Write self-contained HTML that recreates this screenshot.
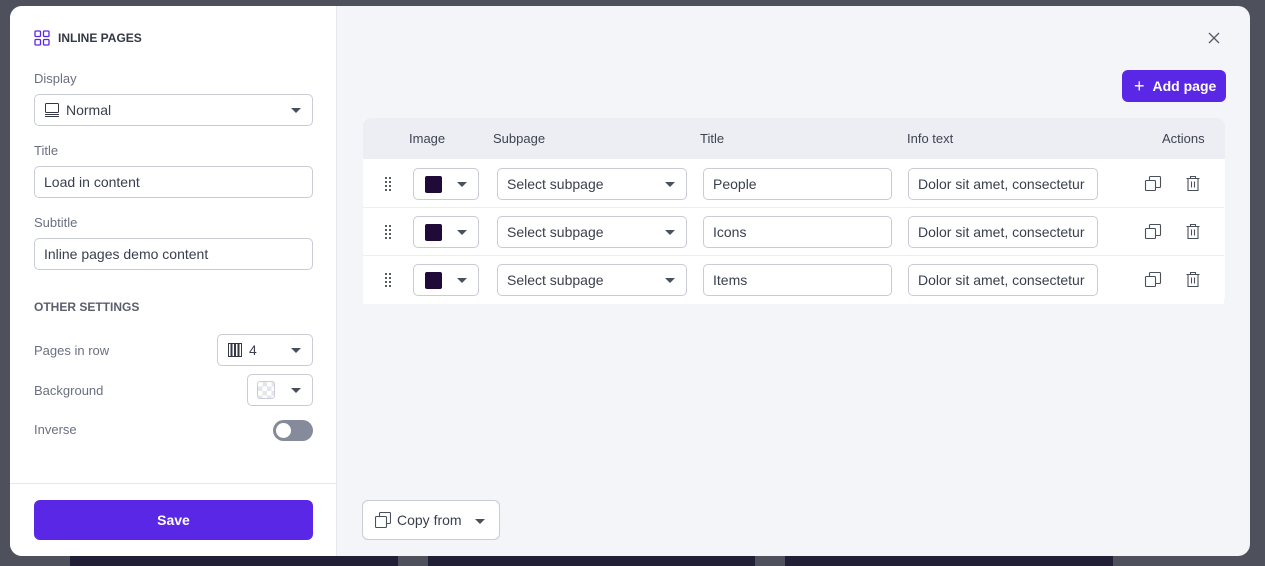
<!DOCTYPE html>
<html><head><style>
*{box-sizing:border-box;margin:0;padding:0}
body{width:1265px;height:566px;background:#4e515b;font-family:"Liberation Sans",sans-serif;position:relative;overflow:hidden;color:#333844}
.a{position:absolute}
.blk{background:#211f36;top:556px;height:10px}
.modal{left:10px;top:6px;width:1240px;height:550px;border-radius:12px;overflow:hidden;background:#f4f5f8}
.left{left:0;top:0;width:327px;height:550px;background:#fff;border-right:1px solid #e6e8ee}
.lbl{font-size:13px;color:#6b7080}
.inp{border:1px solid #c9ccd6;border-radius:5px;background:#fff;font-size:14px;color:#3a3f4c;display:flex;align-items:center;padding-left:9px}
.caret{position:absolute;width:0;height:0;border-left:5px solid transparent;border-right:5px solid transparent;border-top:5px solid #4a4f5c}
.th{font-size:13px;color:#3e4350;top:131px}
.row{left:363px;width:861px;height:48px;background:#fff;border-bottom:1px solid #eceef2}
.sw{width:17px;height:17px;background:#1f0a38;border-radius:2px}
.clip{overflow:hidden;white-space:nowrap;padding-right:8px}
</style></head><body>
<div class="a blk" style="left:70px;width:328px"></div>
<div class="a blk" style="left:428px;width:327px"></div>
<div class="a blk" style="left:785px;width:328px"></div>
<div class="a modal">
 <div class="a left">
  <svg class="a" style="left:24px;top:24px" width="16" height="16" viewBox="0 0 16 16" fill="none" stroke="#5b27e6" stroke-width="1.3"><rect x="1" y="1" width="5.5" height="5.5" rx="1"/><rect x="9.5" y="1" width="5.5" height="5.5" rx="1"/><rect x="1" y="9.5" width="5.5" height="5.5" rx="1"/><rect x="9.5" y="9.5" width="5.5" height="5.5" rx="1"/></svg>
  <div class="a" style="left:48px;top:25px;font-size:12px;font-weight:bold;color:#333844">INLINE PAGES</div>
  <div class="a lbl" style="left:24px;top:65px">Display</div>
  <div class="a inp" style="left:24px;top:88px;width:279px;height:32px">
   <svg width="16" height="16" viewBox="0 0 16 16" fill="none" stroke="#333844" stroke-width="1"><rect x="1.5" y="1.5" width="13" height="9" rx="1"/><path d="M1 12.5h14M1 14.5h14"/></svg>
   <span style="margin-left:6px">Normal</span><span class="caret" style="right:11px;top:13px"></span></div>
  <div class="a lbl" style="left:24px;top:137px">Title</div>
  <div class="a inp" style="left:24px;top:160px;width:279px;height:32px">Load in content</div>
  <div class="a lbl" style="left:24px;top:209px">Subtitle</div>
  <div class="a inp" style="left:24px;top:232px;width:279px;height:32px">Inline pages demo content</div>
  <div class="a" style="left:24px;top:294px;font-size:12px;font-weight:bold;color:#5a5f6d">OTHER SETTINGS</div>
  <div class="a lbl" style="left:24px;top:337px">Pages in row</div>
  <div class="a inp" style="left:207px;top:328px;width:96px;height:32px">
   <svg width="16" height="16" viewBox="0 0 16 16" fill="none" stroke="#333844" stroke-width="1"><rect x="1.5" y="1.5" width="2.5" height="13"/><rect x="5" y="1.5" width="2.5" height="13"/><rect x="8.5" y="1.5" width="2.5" height="13"/><rect x="12" y="1.5" width="2.5" height="13"/></svg>
   <span style="margin-left:6px">4</span><span class="caret" style="right:11px;top:13px"></span></div>
  <div class="a lbl" style="left:24px;top:377px">Background</div>
  <div class="a inp" style="left:237px;top:368px;width:66px;height:32px">
   <div style="width:18px;height:18px;border:1px solid #ccd;border-radius:3px;background:repeating-conic-gradient(#e4e6ea 0 25%,#fff 0 50%) 0 0/9px 9px"></div>
   <span class="caret" style="right:11px;top:13px"></span></div>
  <div class="a lbl" style="left:24px;top:416px">Inverse</div>
  <div class="a" style="left:263px;top:414px;width:40px;height:21px;border-radius:11px;background:#868b9c"><div class="a" style="left:3px;top:3px;width:15px;height:15px;border-radius:50%;background:#fff"></div></div>
  <div class="a" style="left:0;top:477px;width:327px;border-top:1px solid #e6e8ee"></div>
  <div class="a" style="left:24px;top:494px;width:279px;height:40px;border-radius:6px;background:#5b27e6;color:#fff;font-size:14px;font-weight:bold;display:flex;align-items:center;justify-content:center">Save</div>
 </div>
 <svg class="a" style="left:1197px;top:25px" width="14" height="14" viewBox="0 0 14 14" stroke="#555a66" stroke-width="1.3"><path d="M2 2l10 10M12 2L2 12"/></svg>
 <div class="a" style="left:1112px;top:64px;width:104px;height:32px;border-radius:6px;background:#5b27e6;color:#fff;font-size:14px;font-weight:bold;display:flex;align-items:center;padding-left:12px"><span style="font-weight:normal;font-size:18px;margin-right:8px">+</span>Add page</div>
</div>
<div class="a" style="left:363px;top:118px;width:862px;height:186px;border-radius:8px;overflow:hidden;background:#fff">
 <div class="a" style="left:0;top:0;width:862px;height:41px;background:#eceef3"></div>
</div>
<div class="a th" style="left:409px">Image</div>
<div class="a th" style="left:493px">Subpage</div>
<div class="a th" style="left:700px">Title</div>
<div class="a th" style="left:907px">Info text</div>
<div class="a th" style="left:1162px">Actions</div>
<div class="a row" style="top:160px"></div>
<div class="a row" style="top:208px"></div>
<div class="a row" style="top:256px;border-bottom:none"></div>
<svg class="a" style="left:384px;top:177px" width="8" height="110" viewBox="0 0 8 110" fill="#555a66">
 <g id="d"><rect x="1" y="0" width="2" height="2"/><rect x="5" y="0" width="2" height="2"/><rect x="1" y="4" width="2" height="2"/><rect x="5" y="4" width="2" height="2"/><rect x="1" y="8" width="2" height="2"/><rect x="5" y="8" width="2" height="2"/><rect x="1" y="12" width="2" height="2"/><rect x="5" y="12" width="2" height="2"/></g>
 <use href="#d" y="48"/><use href="#d" y="96"/>
</svg>
<!-- row 1 -->
<div class="a inp" style="left:413px;top:168px;width:66px;height:32px;padding-left:11px"><div class="sw"></div><span class="caret" style="right:11px;top:13px"></span></div>
<div class="a inp" style="left:497px;top:168px;width:190px;height:32px">Select subpage<span class="caret" style="right:11px;top:13px"></span></div>
<div class="a inp" style="left:703px;top:168px;width:189px;height:32px">People</div>
<div class="a inp clip" style="left:908px;top:168px;width:190px;height:32px"><span style="overflow:hidden;width:171px;display:block">Dolor sit amet, consectetur</span></div>
<!-- row 2 -->
<div class="a inp" style="left:413px;top:216px;width:66px;height:32px;padding-left:11px"><div class="sw"></div><span class="caret" style="right:11px;top:13px"></span></div>
<div class="a inp" style="left:497px;top:216px;width:190px;height:32px">Select subpage<span class="caret" style="right:11px;top:13px"></span></div>
<div class="a inp" style="left:703px;top:216px;width:189px;height:32px">Icons</div>
<div class="a inp clip" style="left:908px;top:216px;width:190px;height:32px"><span style="overflow:hidden;width:171px;display:block">Dolor sit amet, consectetur</span></div>
<!-- row 3 -->
<div class="a inp" style="left:413px;top:264px;width:66px;height:32px;padding-left:11px"><div class="sw"></div><span class="caret" style="right:11px;top:13px"></span></div>
<div class="a inp" style="left:497px;top:264px;width:190px;height:32px">Select subpage<span class="caret" style="right:11px;top:13px"></span></div>
<div class="a inp" style="left:703px;top:264px;width:189px;height:32px">Items</div>
<div class="a inp clip" style="left:908px;top:264px;width:190px;height:32px"><span style="overflow:hidden;width:171px;display:block">Dolor sit amet, consectetur</span></div>
<svg class="a" style="left:1144px;top:175px" width="18" height="116" viewBox="0 0 18 116" fill="none" stroke="#4a4f5c" stroke-width="1.1">
 <g><rect x="1.5" y="5.5" width="10" height="10" rx="1"/><path d="M5.5 5.5V2.5a1 1 0 0 1 1-1h9a1 1 0 0 1 1 1v9a1 1 0 0 1-1 1h-4"/></g>
 <g transform="translate(0,48)"><rect x="1.5" y="5.5" width="10" height="10" rx="1"/><path d="M5.5 5.5V2.5a1 1 0 0 1 1-1h9a1 1 0 0 1 1 1v9a1 1 0 0 1-1 1h-4"/></g>
 <g transform="translate(0,96)"><rect x="1.5" y="5.5" width="10" height="10" rx="1"/><path d="M5.5 5.5V2.5a1 1 0 0 1 1-1h9a1 1 0 0 1 1 1v9a1 1 0 0 1-1 1h-4"/></g>
</svg>
<svg class="a" style="left:1185px;top:175px" width="16" height="116" viewBox="0 0 16 116" fill="none" stroke="#4a4f5c" stroke-width="1.1">
 <g><path d="M1.5 3.5h13M5.5 3.5V1.5h5v2M3 3.5v12h10v-12M6.5 6.5v6M9.5 6.5v6"/></g>
 <g transform="translate(0,48)"><path d="M1.5 3.5h13M5.5 3.5V1.5h5v2M3 3.5v12h10v-12M6.5 6.5v6M9.5 6.5v6"/></g>
 <g transform="translate(0,96)"><path d="M1.5 3.5h13M5.5 3.5V1.5h5v2M3 3.5v12h10v-12M6.5 6.5v6M9.5 6.5v6"/></g>
</svg>
<div class="a inp" style="left:362px;top:500px;width:138px;height:40px;padding-left:12px;border-radius:6px">
 <svg width="16" height="16" viewBox="0 0 16 16" fill="none" stroke="#4a4f5c" stroke-width="1.1"><rect x="0.5" y="4.5" width="11" height="11" rx="1"/><path d="M4.5 4.5V1.5a1 1 0 0 1 1-1h9a1 1 0 0 1 1 1v9a1 1 0 0 1-1 1h-3"/></svg>
 <span style="margin-left:6px">Copy from</span><span class="caret" style="right:14px;top:18px"></span></div>
</body></html>
